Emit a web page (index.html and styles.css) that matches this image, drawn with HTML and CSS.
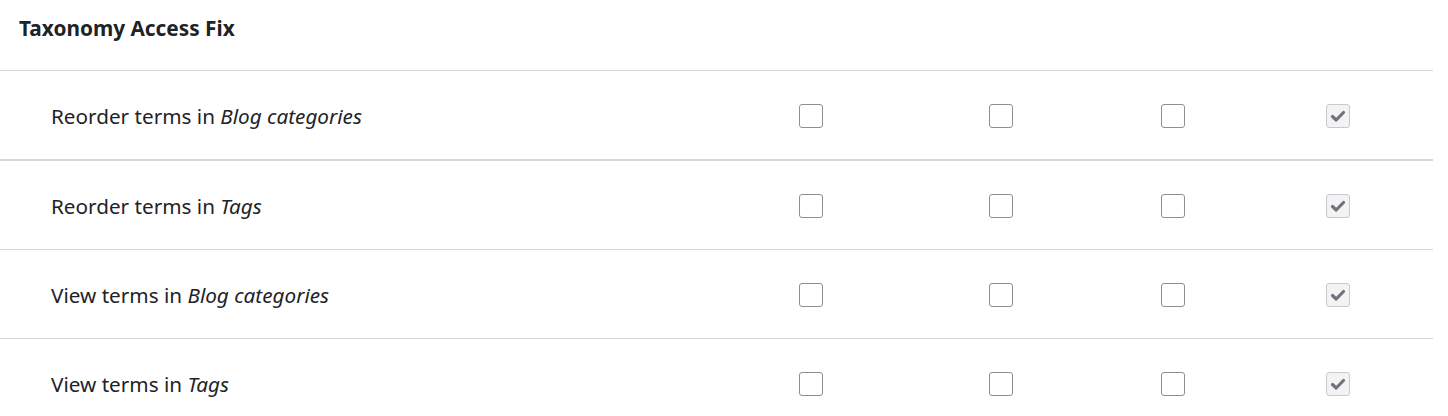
FILE: index.html
```html
<!DOCTYPE html>
<html>
<head>
<meta charset="utf-8">
<link rel="stylesheet" href="styles.css">
</head>
<body>
<div class="panel">
  <div class="panel-head"><h2 class="title">Taxonomy Access Fix</h2></div>
  <div class="row row-first">
    <div class="label">Reorder terms in <em>Blog categories</em></div>
    <div class="cell"><span class="cb"></span></div>
    <div class="cell"><span class="cb"></span></div>
    <div class="cell"><span class="cb"></span></div>
    <div class="cell"><span class="cb cb-checked"><svg viewBox="0 0 22 22" width="22" height="22"><path d="M5.5 11.5 L9.2 15 L16.5 7.5" fill="none" stroke="#72727e" stroke-width="3.2" stroke-linecap="round" stroke-linejoin="round"/></svg></span></div>
  </div>
  <div class="row">
    <div class="label">Reorder terms in <em>Tags</em></div>
    <div class="cell"><span class="cb"></span></div>
    <div class="cell"><span class="cb"></span></div>
    <div class="cell"><span class="cb"></span></div>
    <div class="cell"><span class="cb cb-checked"><svg viewBox="0 0 22 22" width="22" height="22"><path d="M5.5 11.5 L9.2 15 L16.5 7.5" fill="none" stroke="#72727e" stroke-width="3.2" stroke-linecap="round" stroke-linejoin="round"/></svg></span></div>
  </div>
  <div class="row">
    <div class="label">View terms in <em>Blog categories</em></div>
    <div class="cell"><span class="cb"></span></div>
    <div class="cell"><span class="cb"></span></div>
    <div class="cell"><span class="cb"></span></div>
    <div class="cell"><span class="cb cb-checked"><svg viewBox="0 0 22 22" width="22" height="22"><path d="M5.5 11.5 L9.2 15 L16.5 7.5" fill="none" stroke="#72727e" stroke-width="3.2" stroke-linecap="round" stroke-linejoin="round"/></svg></span></div>
  </div>
  <div class="row row-last">
    <div class="label">View terms in <em>Tags</em></div>
    <div class="cell"><span class="cb"></span></div>
    <div class="cell"><span class="cb"></span></div>
    <div class="cell"><span class="cb"></span></div>
    <div class="cell"><span class="cb cb-checked"><svg viewBox="0 0 22 22" width="22" height="22"><path d="M5.5 11.5 L9.2 15 L16.5 7.5" fill="none" stroke="#72727e" stroke-width="3.2" stroke-linecap="round" stroke-linejoin="round"/></svg></span></div>
  </div>
</div>
</body>
</html>
```
FILE: styles.css
```css
html, body {
  margin: 0;
  padding: 0;
  background: #ffffff;
}
body {
  font-family: "Noto Sans", "Open Sans", sans-serif;
  color: #1d2327;
  overflow: hidden;
}
.panel {
  width: 1433px;
}
.panel-head {
  height: 70px;
  border-bottom: 1px solid #d6d6da;
  display: flex;
  align-items: center;
  padding-left: 19px;
}
.title {
  margin: 0;
  margin-top: -14px;
  font-size: 20.8px;
  font-weight: 700;
}
.row {
  display: grid;
  grid-template-columns: 723px 176px 204px 140px 190px;
  height: 88px;
  align-items: center;
  border-bottom: 1px solid #d6d6da;
}
.row-first {
  border-bottom-width: 2px;
}
.row-last {
  border-bottom: none;
}
.label {
  padding-left: 51px;
  font-size: 20.7px;
  padding-top: 1px;
}
.label em {
  font-style: italic;
}
.cell {
  display: flex;
  justify-content: center;
}
.cb {
  box-sizing: border-box;
  width: 24px;
  height: 24px;
  border: 1px solid #8c8f94;
  border-radius: 3px;
  background: #fff;
  display: flex;
  align-items: center;
  justify-content: center;
  margin-top: 2px;
}
.cb-checked {
  border-color: #c9c9cd;
  background: #f3f3f4;
}
.cb-checked svg {
  display: block;
}
```
